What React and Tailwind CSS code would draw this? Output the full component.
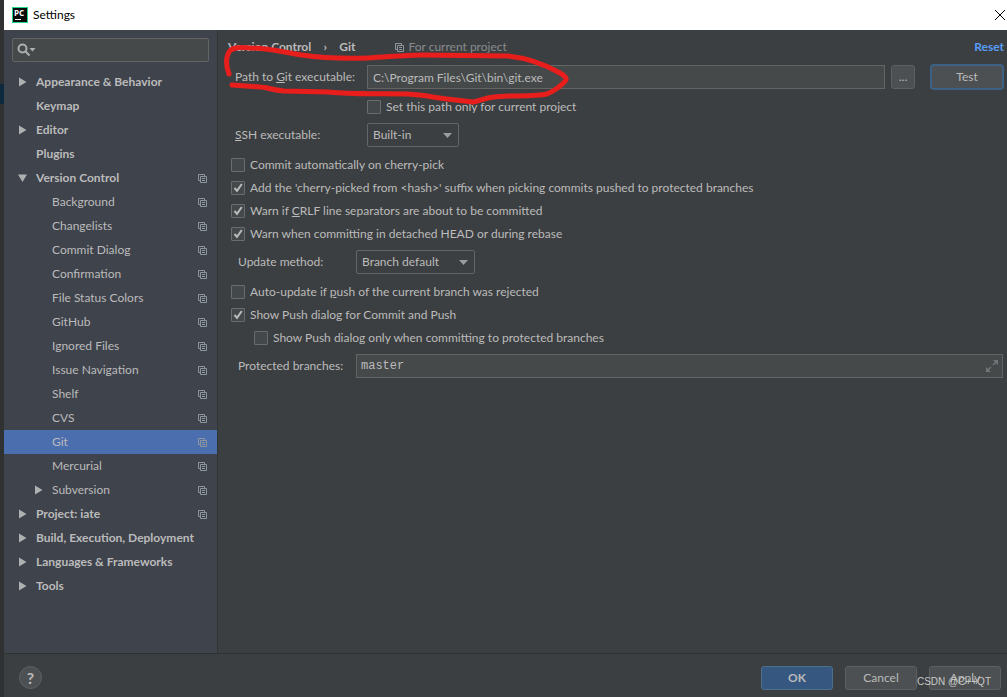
import React, { useState } from 'react';

const tree = [
  { label: 'Appearance & Behavior', level: 0, arrow: 'right' },
  { label: 'Keymap', level: 0 },
  { label: 'Editor', level: 0, arrow: 'right' },
  { label: 'Plugins', level: 0 },
  { label: 'Version Control', level: 0, arrow: 'down', project: true },
  { label: 'Background', level: 1, project: true },
  { label: 'Changelists', level: 1, project: true },
  { label: 'Commit Dialog', level: 1, project: true },
  { label: 'Confirmation', level: 1, project: true },
  { label: 'File Status Colors', level: 1, project: true },
  { label: 'GitHub', level: 1, project: true },
  { label: 'Ignored Files', level: 1, project: true },
  { label: 'Issue Navigation', level: 1, project: true },
  { label: 'Shelf', level: 1, project: true },
  { label: 'CVS', level: 1, project: true },
  { label: 'Git', level: 1, project: true },
  { label: 'Mercurial', level: 1, project: true },
  { label: 'Subversion', level: 1, arrow: 'right', project: true },
  { label: 'Project: iate', level: 0, arrow: 'right', project: true },
  { label: 'Build, Execution, Deployment', level: 0, arrow: 'right' },
  { label: 'Languages & Frameworks', level: 0, arrow: 'right' },
  { label: 'Tools', level: 0, arrow: 'right' },
];

const CopyIcon = () => (
  <svg width="9" height="9" viewBox="0 0 9 9" fill="none" stroke="#8e969e" className="shrink-0">
    <path d="M2 6.500H.5v-6h6V2" />
    <path d="M2.500 2.500h6v6h-6zM4 4.500h3M4 6.500h3" />
  </svg>
);

const Arrow = ({ dir }) => (
  <svg width="9" height="10" viewBox="0 0 9 10" fill="#adafb1" className="shrink-0">
    {dir === 'right' && <path d="M1 .5 8.500 5 1 9.500z" />}
    {dir === 'down' && <path d="M0 1.500h9L4.500 9z" />}
  </svg>
);

const TreeItem = ({ item, selected, onSelect }) => (
  <li>
    <button
      onClick={onSelect}
      className={`flex h-6 w-full items-center gap-[9px] pr-[10px] text-left ${item.level ? 'pl-[30px]' : 'pl-[14px] font-bold'} ${selected ? 'bg-[#4b6eaf]' : ''}`}
    >
      <Arrow dir={item.arrow} />
      <span className="flex-1 whitespace-nowrap">{item.label}</span>
      {item.project && <CopyIcon />}
    </button>
  </li>
);

const Check = ({ children, defaultChecked, className = 'pl-[13px]' }) => (
  <label className={`flex h-[23px] items-center gap-[5px] ${className}`}>
    <span className="grid size-[14px] shrink-0">
      <input
        type="checkbox"
        defaultChecked={defaultChecked}
        className="peer col-start-1 row-start-1 size-[14px] appearance-none rounded-[1px] border border-[#6b6b6b] bg-[#43494a]"
      />
      <svg viewBox="0 0 14 14" fill="none" stroke="#bbbbbb" strokeWidth="2" className="pointer-events-none invisible col-start-1 row-start-1 size-[14px] peer-checked:visible">
        <path d="M3.500 7 6 9.800 10.800 3" />
      </svg>
    </span>
    <span className="whitespace-nowrap">{children}</span>
  </label>
);

const Select = ({ id, options, className }) => (
  <div className={`grid items-center ${className}`}>
    <select id={id} className="col-start-1 row-start-1 h-6 w-full appearance-none rounded-[2px] border border-[#646464] bg-[#3c3f41] pl-[5px]">
      {options.map((o) => (
        <option key={o}>{o}</option>
      ))}
    </select>
    <svg width="9" height="5" viewBox="0 0 9 5" fill="#9a9da0" className="pointer-events-none col-start-1 row-start-1 mr-[7px] justify-self-end">
      <path d="M0 0h9L4.500 5z" />
    </svg>
  </div>
);

const Logo = () => (
  <svg width="16" height="16" viewBox="0 0 16 16" className="shrink-0">
    <rect width="16" height="16" fill="#21d789" />
    <rect x="1" y="1" width="14" height="14" fill="#0b0b0b" />
    <path d="M3 12.500h6" stroke="#fff" />
    <text x="2" y="9" fill="#fff" fontSize="8" fontWeight="700" fontFamily="Open Sans, sans-serif">PC</text>
  </svg>
);

const Sidebar = () => {
  const [selected, setSelected] = useState('Git');

  return (
    <aside className="w-[214px] shrink-0 border-r border-[#323435] bg-[#3f434c] pt-2">
      <label className="mx-2 flex h-6 items-center rounded-[2px] border border-[#646464] bg-[#45494a] pl-1">
        <svg width="19" height="14" viewBox="0 0 19 14" fill="none" stroke="#adafb1" strokeWidth="2" className="shrink-0">
          <circle cx="5.500" cy="5.500" r="4" />
          <path d="m8.500 8.500 4 4" />
          <path d="M12.500 5h6l-3 3.500z" fill="#adafb1" stroke="none" />
        </svg>
        <input type="text" aria-label="Search settings" className="min-w-0 flex-1 px-1 outline-none" />
      </label>
      <ul className="mt-2">
        {tree.map((item) => (
          <TreeItem key={item.label} item={item} selected={item.label === selected} onSelect={() => setSelected(item.label)} />
        ))}
      </ul>
    </aside>
  );
};

const Scribble = () => (
  <svg width="360" height="90" viewBox="0 0 360 90" fill="none" stroke="#e81e1c" strokeWidth="5" strokeLinecap="round" strokeLinejoin="round" className="pointer-events-none absolute top-0 left-0">
    <path d="M11 44C8 36 8 29 10 24C12 17 22 17 32 18C48 18 66 22 84 25C104 28 120 29 150 28C170 27 186 25 204 25L290 26C308 28 328 35 342 43C347 46 349 48 348 50C345 54 337 61 329 64C316 67 290 65 276 67C266 68 262 71 255 72L238 70C217 68 208 65 190 64C160 63 140 65 110 62L66 61C54 60 48 57 42 57L14 55" />
  </svg>
);

const GitSettings = () => (
  <main className="relative min-w-0 flex-1 pt-2 pr-1">
    <div className="mb-[9px] flex h-[18px] items-center pl-[10px]">
      <span className="font-bold">Version Control</span>
      <span className="w-7 text-center font-bold">›</span>
      <span className="font-bold">Git</span>
      <span className="ml-10 flex items-center gap-1 text-[#888b8d]">
        <CopyIcon />
        For current project
      </span>
      <a href="#reset" className="-mr-px ml-auto font-bold text-[#589df6]">Reset</a>
    </div>

    <div className="flex h-6 items-center pl-[17px]">
      <label htmlFor="git-path" className="w-[132px] shrink-0">Path to <u>G</u>it executable:</label>
      <input id="git-path" type="text" defaultValue="C:\Program Files\Git\bin\git.exe" className="h-6 min-w-0 flex-1 border border-[#646464] bg-[#45494a] px-[5px]" />
      <button className="ml-[6px] h-6 w-6 rounded-[3px] border border-[#5e6060] bg-[#4c5052]">...</button>
      <button className="mr-[1px] ml-[17px] h-[22px] w-[70px] rounded-[2px] bg-[#4c5052] ring-2 ring-[#3d6185]">Test</button>
    </div>
    <Check className="mt-[6px] pl-[149px]">Set this path only for current project</Check>

    <div className="mt-[5px] mb-[6px] flex h-6 items-center pl-[17px]">
      <label htmlFor="ssh" className="w-[132px] shrink-0"><u>S</u>SH executable:</label>
      <Select id="ssh" options={['Built-in', 'Native']} className="w-[92px]" />
    </div>

    <Check>Commit automatically on cherry-pick</Check>
    <Check defaultChecked>Add the 'cherry-picked from &lt;hash&gt;' suffix when picking commits pushed to protected branches</Check>
    <Check defaultChecked>Warn if <u>C</u>RLF line separators are about to be committed</Check>
    <Check defaultChecked>Warn when committing in detached HEAD or during rebase</Check>

    <div className="mt-[5px] mb-[6px] flex h-6 items-center pl-5">
      <label htmlFor="update" className="w-[118px] shrink-0">Update method:</label>
      <Select id="update" options={['Branch default', 'Merge', 'Rebase']} className="w-[119px]" />
    </div>

    <Check>Auto-update if <u>p</u>ush of the current branch was rejected</Check>
    <Check defaultChecked>Show Push dialog for Commit and Push</Check>
    <Check className="pl-9">Show Push dialog only when committing to protected branches</Check>

    <div className="mt-[5px] flex h-6 items-center pl-5">
      <label htmlFor="branches" className="w-[118px] shrink-0">Protected branches:</label>
      <div className="flex h-6 min-w-0 flex-1 items-center border border-[#646464] bg-[#45494a] pr-1">
        <input id="branches" type="text" defaultValue="master" className="min-w-0 flex-1 px-1 font-['Liberation_Mono',monospace]" />
        <svg width="12" height="12" viewBox="0 0 12 12" fill="#6f7578" stroke="#6f7578" className="shrink-0">
          <path d="M7 0h5v5zM0 7v5h5z" stroke="none" />
          <path d="m7 5 3-3M2 10l3-3" strokeWidth="1.500" />
        </svg>
      </div>
    </div>

    <Scribble />
  </main>
);

const App = () => {
  return (
    <div className="flex min-h-screen bg-[#2f3133] font-['Lato','Open_Sans',sans-serif] text-[12px] leading-4 text-[#bbbbbb]">
      <div className="w-1 shrink-0 pt-[84px]">
        <div className="h-5 bg-[#0d293e]" />
      </div>

      <div className="flex min-w-0 flex-1 flex-col bg-[#3c3f41]">
        <header className="flex h-[30px] shrink-0 items-center gap-[5px] bg-white pr-[2px] pl-2 text-black">
          <Logo />
          <h1 className="flex-1">Settings</h1>
          <button aria-label="Close">
            <svg width="10" height="10" viewBox="0 0 10 10" stroke="#000" fill="none">
              <path d="m0 0 10 10M10 0 0 10" />
            </svg>
          </button>
        </header>

        <div className="flex flex-1">
          <Sidebar />
          <GitSettings />
        </div>

        <footer className="relative flex h-11 shrink-0 items-center gap-3 border-t border-[#2f3133] pt-1 pr-[6px] pl-[15px]">
          <button aria-label="Help" className="mr-auto size-[23px] rounded-full border border-[#5e6060] bg-[#4c5052] text-[16px] font-bold">?</button>
          <button className="h-6 w-[72px] rounded-[3px] border border-[#4c708c] bg-[#365880] font-bold">OK</button>
          <button className="h-6 w-[72px] rounded-[3px] border border-[#5e6060] bg-[#4c5052]">Cancel</button>
          <button className="h-6 w-[72px] rounded-[3px] border border-[#5e6060] bg-[#4c5052]">Apply</button>
          <span className="pointer-events-none absolute right-4 bottom-[7px] font-['Liberation_Sans',sans-serif] text-[10px] text-[#c8c8c8]">CSDN @C++QT</span>
        </footer>
      </div>
    </div>
  );
};

export default App;
